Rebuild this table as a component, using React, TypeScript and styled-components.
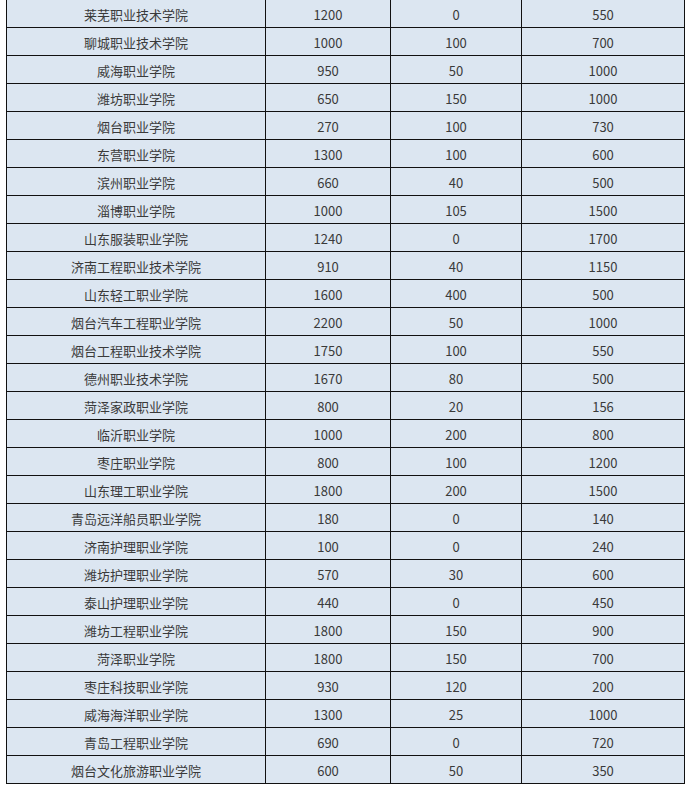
import React from 'react';
import styled, { createGlobalStyle } from 'styled-components';

const GlobalStyle = createGlobalStyle`
  body {
    margin: 0;
    background: #ffffff;
    font-family: "Noto Sans CJK SC", "Noto Sans", sans-serif;
  }
`;

const Page = styled.div`
  padding: 0 3px 0 6px;
  overflow: hidden;
`;

const Table = styled.table`
  width: 678px;
  margin-top: -1px;
  border-collapse: collapse;
  table-layout: fixed;
  background: #dce6f1;
  color: #3a3a3a;
  font-size: 13px;
`;

const Col = styled.col<{ $width: number }>`
  width: ${(p) => p.$width}px;
`;

const Cell = styled.td`
  height: 25px;
  padding: 2px 0 0;
  border: 1px solid #111111;
  text-align: center;
  vertical-align: middle;
  line-height: 16px;
  white-space: nowrap;
`;

type Row = [string, number, number, number];

const columns = [259, 125, 131, 163];

const rows: Row[] = [
  ['莱芜职业技术学院', 1200, 0, 550],
  ['聊城职业技术学院', 1000, 100, 700],
  ['威海职业学院', 950, 50, 1000],
  ['潍坊职业学院', 650, 150, 1000],
  ['烟台职业学院', 270, 100, 730],
  ['东营职业学院', 1300, 100, 600],
  ['滨州职业学院', 660, 40, 500],
  ['淄博职业学院', 1000, 105, 1500],
  ['山东服装职业学院', 1240, 0, 1700],
  ['济南工程职业技术学院', 910, 40, 1150],
  ['山东轻工职业学院', 1600, 400, 500],
  ['烟台汽车工程职业学院', 2200, 50, 1000],
  ['烟台工程职业技术学院', 1750, 100, 550],
  ['德州职业技术学院', 1670, 80, 500],
  ['菏泽家政职业学院', 800, 20, 156],
  ['临沂职业学院', 1000, 200, 800],
  ['枣庄职业学院', 800, 100, 1200],
  ['山东理工职业学院', 1800, 200, 1500],
  ['青岛远洋船员职业学院', 180, 0, 140],
  ['济南护理职业学院', 100, 0, 240],
  ['潍坊护理职业学院', 570, 30, 600],
  ['泰山护理职业学院', 440, 0, 450],
  ['潍坊工程职业学院', 1800, 150, 900],
  ['菏泽职业学院', 1800, 150, 700],
  ['枣庄科技职业学院', 930, 120, 200],
  ['威海海洋职业学院', 1300, 25, 1000],
  ['青岛工程职业学院', 690, 0, 720],
  ['烟台文化旅游职业学院', 600, 50, 350],
];

export default function App() {
  return (
    <Page>
      <GlobalStyle />
      <Table>
        <colgroup>
          {columns.map((w, i) => (
            <Col key={i} $width={w} />
          ))}
        </colgroup>
        <tbody>
          {rows.map(([name, a, b, c]) => (
            <tr key={name}>
              <Cell>{name}</Cell>
              <Cell>{a}</Cell>
              <Cell>{b}</Cell>
              <Cell>{c}</Cell>
            </tr>
          ))}
        </tbody>
      </Table>
    </Page>
  );
}
